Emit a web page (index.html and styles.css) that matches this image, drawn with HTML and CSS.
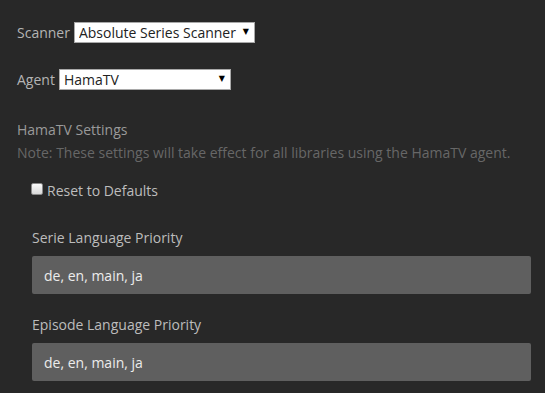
FILE: index.html
```html
<!DOCTYPE html>
<html lang="en">
<head>
    <meta charset="UTF-8">
    <title>Agent Settings</title>
    <link rel="stylesheet" href="styles.css">
</head>
<body>
    <div class="container">
        <div class="field-row">
            <label for="scanner">Scanner</label>
            <span class="select-wrap scanner">
                <select id="scanner">
                    <option>Absolute Series Scanner</option>
                </select>
                <span class="arrow">▼</span>
            </span>
        </div>

        <div class="field-row agent-row">
            <label for="agent">Agent</label>
            <span class="select-wrap agent">
                <select id="agent">
                    <option>HamaTV</option>
                </select>
                <span class="arrow">▼</span>
            </span>
        </div>

        <div class="settings">
            <h3 class="settings-title">HamaTV Settings</h3>
            <p class="settings-note">Note: These settings will take effect for all libraries using the HamaTV agent.</p>

            <div class="settings-body">
                <label class="check-row">
                    <input type="checkbox" id="reset">
                    <span>Reset to Defaults</span>
                </label>

                <div class="pref">
                    <label class="pref-label" for="serieLang">Serie Language Priority</label>
                    <input type="text" id="serieLang" class="pref-input" value="de, en, main, ja">
                </div>

                <div class="pref">
                    <label class="pref-label" for="episodeLang">Episode Language Priority</label>
                    <input type="text" id="episodeLang" class="pref-input" value="de, en, main, ja">
                </div>
            </div>
        </div>
    </div>
</body>
</html>
```

FILE: styles.css
```css
body {
    margin: 0;
    background: #282828;
    font-family: "Open Sans", "Liberation Sans", sans-serif;
    font-size: 14px;
    color: #b4b4b4;
}

.container {
    padding: 22px 14px 0 17px;
}

.field-row {
    display: flex;
    align-items: center;
    gap: 4px;
    height: 21px;
}

.agent-row {
    margin-top: 26px;
}

.select-wrap {
    position: relative;
    display: block;
    height: 21px;
}

.select-wrap.scanner {
    width: 181px;
}

.select-wrap.agent {
    width: 172px;
}

select {
    appearance: none;
    -webkit-appearance: none;
    width: 100%;
    height: 21px;
    margin: 0;
    padding: 0 0 0 4px;
    border: 1px solid #a9a9a9;
    border-radius: 0;
    background: #fff;
    color: #222;
    font-family: "Open Sans", "Liberation Sans", sans-serif;
    font-size: 14px;
    box-sizing: border-box;
}

.arrow {
    position: absolute;
    right: 6px;
    top: 5px;
    font-family: "DejaVu Sans", sans-serif;
    font-size: 8px;
    line-height: 10px;
    color: #000;
    pointer-events: none;
}

.settings {
    margin-top: 30px;
}

.settings-title {
    margin: 0 0 3px;
    font-size: 14px;
    font-weight: normal;
    line-height: 20px;
    color: #9a9a9a;
}

.settings-note {
    margin: 0;
    line-height: 20px;
    color: #676767;
}

.settings-body {
    padding-left: 15px;
}

.check-row {
    display: flex;
    align-items: center;
    margin-top: 18px;
    margin-left: -1px;
    line-height: 20px;
    color: #bdbdbd;
}

.check-row input {
    appearance: none;
    -webkit-appearance: none;
    width: 12px;
    height: 12px;
    margin: 0 4px 0 0;
    border: 1px solid #8a8a8a;
    border-radius: 2px;
    background: linear-gradient(#fafafa, #d8d8d8);
    box-sizing: border-box;
    position: relative;
    top: -2px;
}

.pref {
    margin-top: 27px;
}

.pref + .pref {
    margin-top: 21px;
}

.pref-label {
    display: block;
    line-height: 20px;
    margin-bottom: 8px;
    color: #bcbcbc;
}

.pref-input {
    display: block;
    width: 499px;
    height: 38px;
    margin: 0;
    padding: 0 12px;
    border: none;
    border-radius: 2px;
    background: #5f5f5f;
    color: #ececec;
    font-family: "Open Sans", "Liberation Sans", sans-serif;
    font-size: 14px;
    box-sizing: border-box;
    outline: none;
}
```
